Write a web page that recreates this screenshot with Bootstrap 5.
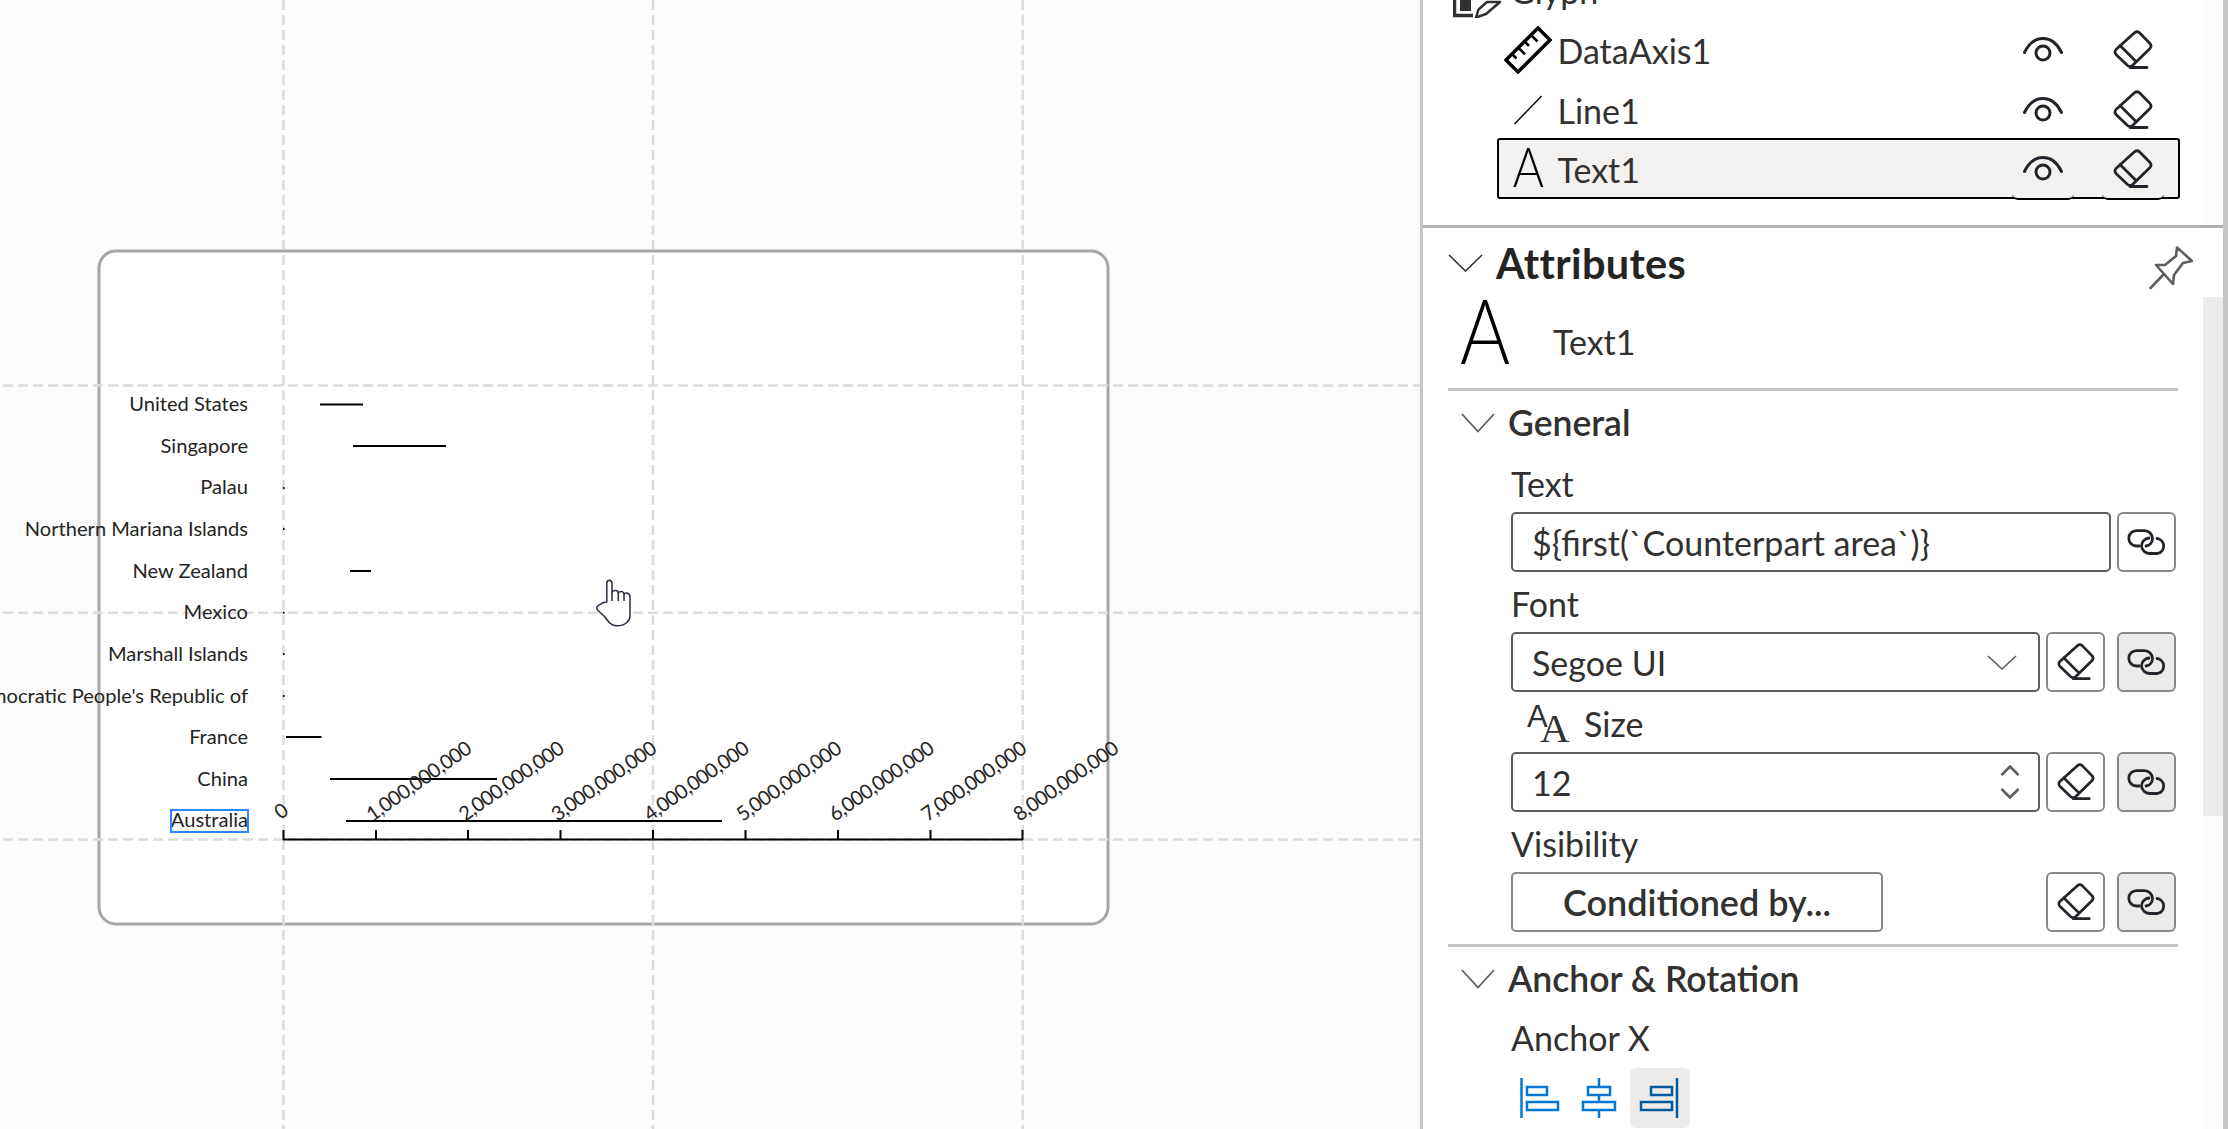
<!DOCTYPE html>
<html lang="en">
<head>
<meta charset="utf-8">
<title>Chart editor</title>
<link href="https://cdn.jsdelivr.net/npm/bootstrap@5.3.0/dist/css/bootstrap.min.css" rel="stylesheet">
<style>
html,body{height:100%;overflow:hidden;background:#fbfbfb}
body{font-family:"Lato","Liberation Sans",sans-serif;color:#323130;font-size:34px}
.app-shell{width:2228px;height:1129px}
.canvas-area{width:1420px;height:1129px;flex:none;background:#fbfbfb}
.canvas-area svg{display:block}
.chart-txt{font-family:"Lato","Liberation Sans",sans-serif;font-size:20.1px;fill:#252423}
.tick-txt{font-family:"Lato","Liberation Sans",sans-serif;font-size:20px;letter-spacing:-.55px;fill:#252423}
.side-panel{width:808px;height:1129px;flex:none;background:#fff;border-left:3px solid #c8c6c4;border-right:5px solid #c8c6c4}
.pane-top{height:225px;overflow:hidden}
.pane-rule{height:3px;background:#b3b0ad;flex:none}
.pane-body{height:901px;overflow:hidden}
.pane-main{width:780px;flex:none;overflow:hidden}
.track-top{width:20px;flex:none;background:#fbfbfb}
.track-body{width:20px;flex:none;background:#fbfbfb}
.track-gap{height:69px;background:#fff}
.track-thumb{height:519px;background:#ececec}
.tree-list{width:683px;margin:-40px 0 0 74px}
.tree-row{height:60px;padding-right:14px;border:2px solid transparent;border-radius:3px}
.tree-root{margin-left:-46px;width:300px}
.tree-root svg{flex:none;margin:0 7px 0 0;position:relative;top:3px}
.tree-row.is-picked{background:#f3f2f1;border-color:#000;height:61px;margin-top:-2px;position:relative}
.picked-name{padding-top:2px}
.tree-ico{width:58.500px;flex:none}
.tree-acts{gap:28px}
.act-btn{width:62px;height:56px;padding:0;border:0;background:transparent;border-radius:0}
.is-picked .act-btn{height:59px;align-self:flex-start;background:#f3f2f1;border-bottom:2px solid #000;border-radius:0 0 6px 6px;position:relative;margin-bottom:-3px}
.glyph-a{font-family:"Lato",sans-serif;font-weight:300;color:#000;line-height:1;transform:scaleX(.85)}
.glyph-row{font-size:56px;margin-bottom:6px}
.attr-head{height:70px;padding-left:25px}
.attr-title{font-weight:700;font-size:41.500px;letter-spacing:.3px;margin-left:13px;color:#252423}
.pin-slot{margin-left:auto;margin-right:10px;margin-top:10px}
.attr-sub{height:90px;padding-left:37px}
.attr-sub .glyph-a{font-size:90px;width:93px;flex:none;text-align:left;transform-origin:left center;margin-bottom:28px}
.attr-name{margin-bottom:4px}
.sec-rule{height:3px;background:#c8c6c4;width:730px;margin-left:25px;margin-bottom:0}
.sec-head{height:64px;padding-left:38px;font-weight:600;font-size:35.500px}
.sec-head span{margin-left:13px}
.fld-wrap{margin-left:88px;width:665px}
.fld-label{height:57px}
.fld-label.lbl-tall{height:60px;padding-top:2px}
.fld-label.lbl-up{padding-bottom:4px}
.fld-line{height:60px;gap:6px}
.fld-box.form-control{height:60px;flex:1 1 0;padding:0 0 0 19px;font-size:inherit;color:#323130;border:2.500px solid #605e5c;border-radius:5px;background:#fff}
.sq-btn{width:59px;height:60px;flex:none;padding:0;background:#fff;border:2.500px solid #8a8886;border-radius:6px;margin-left:0}
.sq-btn.is-on{background:#edebe9}
.sq-gap{margin-right:6px}
.size-ico{margin:0 13px 0 16px}
.sel-chev{margin-right:21px}
.cond-btn{width:372px;height:60px;padding:0;background:#fff;border:2.500px solid #8a8886;border-radius:5px;color:#323130;font-size:36px;font-weight:600}
.spin-col{gap:12px;margin-right:18px}
.mt-rule{margin-top:12px}
.algn-row{height:60px;margin-left:87px;width:180px}
.algn-btn{width:60px;height:60px;padding:0;border:0;background:transparent;border-radius:6px}
.algn-btn.is-on{background:#edebe9}
.hand-cursor{pointer-events:none}
</style>
</head>
<body class="m-0">
<svg class="d-none" aria-hidden="true">
  <symbol id="i-eraser" viewBox="0 0 40 40"><path d="M21.5 2.8Q24 .8 26.500 2.8L37 13.5Q39 16 37 18.5L19.5 35.5Q17 37.5 14.5 35.5L3 24.5Q1 22 3 19.5ZM7 15.5 23 31.5M17 37.5H34" fill="none" stroke="currentColor" stroke-width="2.8" stroke-linejoin="round" stroke-linecap="round"/></symbol>
  <symbol id="i-link" viewBox="0 0 40 26"><g fill="none" stroke="currentColor" stroke-width="2.8" stroke-linecap="round"><path d="M12 17H9.5A7.7 7.7 0 0 1 9.5 1.6H17.5A8 8 0 0 1 25.5 9.5C25.5 14 22 16.5 19 17"/><path d="M30 9.5A7.6 7.6 0 0 1 30.5 24.5H22.5A8 8 0 0 1 14.5 17C14.5 12.5 18 9.7 22 9"/></g></symbol>
  <symbol id="i-eye" viewBox="0 0 40 26"><g fill="none" stroke="currentColor" stroke-width="3" stroke-linecap="round"><path d="M1.5 15.5C6 6 13 1.5 20 1.5S34 6 38.5 15.5"/><circle cx="20" cy="16" r="7"/></g></symbol>
</svg>
<div class="app-shell d-flex">
  <div class="canvas-area">
    <svg width="1420" height="1129" viewBox="0 0 1420 1129" role="img" aria-label="Chart">
      <rect x="99" y="251" width="1009" height="673" rx="17" fill="#fff" stroke="#a6a6a6" stroke-width="3"/>
      <g stroke="#dcdcdc" stroke-width="2.5" stroke-dasharray="10 5" fill="none">
        <path d="M3 385.500H1420M3 612.700H1420M3 839.500H1420"/>
        <path d="M283.500 0V1129M653 0V1129M1022.800 0V1129"/>
      </g>
      <g class="chart-txt" text-anchor="end">
        <text x="248" y="411">United States</text>
        <text x="248" y="453">Singapore</text>
        <text x="248" y="494">Palau</text>
        <text x="248" y="536">Northern Mariana Islands</text>
        <text x="248" y="578">New Zealand</text>
        <text x="248" y="619">Mexico</text>
        <text x="248" y="661">Marshall Islands</text>
        <text x="248" y="703">Korea, Democratic People's Republic of</text>
        <text x="248" y="744">France</text>
        <text x="248" y="786">China</text>
        <text x="248" y="827">Australia</text>
      </g>
      <rect x="171" y="810" width="77" height="22" fill="none" stroke="#2b88ff" stroke-width="2"/>
      <g stroke="#000" stroke-width="2" fill="none">
        <path d="M320 404.500H363M353 446H446M350 571H371M286 737H321.500M330 779H497M346 821H722"/>
        <path d="M283 488h1.500M283 529h1.500M283 612.700h1.500M283 654h1.500M283 696h1.500"/>
        <path d="M283 839.500H1023M283.500 830V840M376 830V840M468 830V840M560.500 830V840M653 830V840M745.500 830V840M838 830V840M930.500 830V840M1022.500 830V840"/>
      </g>
      <g class="tick-txt">
        <text transform="translate(280.500 820) rotate(-35)">0</text>
        <text transform="translate(372.500 822) rotate(-35)">1,000,000,000</text>
        <text transform="translate(465 822) rotate(-35)">2,000,000,000</text>
        <text transform="translate(557.500 822) rotate(-35)">3,000,000,000</text>
        <text transform="translate(650 822) rotate(-35)">4,000,000,000</text>
        <text transform="translate(742.500 822) rotate(-35)">5,000,000,000</text>
        <text transform="translate(835 822) rotate(-35)">6,000,000,000</text>
        <text transform="translate(927.500 822) rotate(-35)">7,000,000,000</text>
        <text transform="translate(1019.500 822) rotate(-35)">8,000,000,000</text>
      </g>
      <g class="hand-cursor" fill="#fff" stroke="#2b2b44" stroke-width="1.5" stroke-linejoin="round">
        <path d="M597 606.700C600 604 604 602 606.800 602V583.500C606.800 579 612 579 612 583.500V592C614 589.500 618 590 618.300 593C620 590.500 623.500 591 624 594C626 592 630 593 630 597V616C630 621 625 625.800 617 625.800C611 625.800 608 621.500 605 617L597 609.500Z"/>
        <path d="M612 592V601M618.300 593V601M624 594V601" fill="none"/>
      </g>
    </svg>
  </div>
  <aside class="side-panel d-flex flex-column">
    <div class="pane-top d-flex">
      <div class="pane-main">
        <div class="tree-list">
          <div class="tree-row tree-root d-flex align-items-center">
            <svg width="50" height="50" viewBox="0 0 50 50" fill="none" stroke="#323130" stroke-width="3"><path d="M1.500 20V47.500H20" stroke-width="3.500"/><rect x="7" y="30" width="11" height="13" fill="#323130" stroke="none"/><path d="M23 49.500 25.500 41.500 34 34 47 34 33 46Z" stroke-width="2.500" stroke-linejoin="round"/></svg>
            <span>Glyph</span>
          </div>
          <div class="tree-row d-flex align-items-center">
            <span class="tree-ico d-flex justify-content-center">
              <svg width="48" height="48" viewBox="0 0 48 48" fill="none" stroke="#000" stroke-width="3.4" stroke-linejoin="miter"><path d="M34 2 46 14 14 46 2 34Z"/><path d="M8 28 12.500 32.500M14.300 21.700 21 28.400M20.600 15.400 25 19.800M27 9 33.500 15.500" stroke-width="2.600"/></svg>
            </span>
            <span>DataAxis1</span>
            <span class="tree-acts d-flex ms-auto">
              <button class="btn act-btn" type="button" aria-label="Show"><svg width="40" height="26" class="text-dark"><use href="#i-eye"/></svg></button>
              <button class="btn act-btn" type="button" aria-label="Erase"><svg width="40" height="40" class="text-dark"><use href="#i-eraser"/></svg></button>
            </span>
          </div>
          <div class="tree-row d-flex align-items-center">
            <span class="tree-ico d-flex justify-content-center">
              <svg width="30" height="30" viewBox="0 0 30 30"><path d="M1.500 29 28.500 1" stroke="#000" stroke-width="1.400" fill="none"/></svg>
            </span>
            <span>Line1</span>
            <span class="tree-acts d-flex ms-auto">
              <button class="btn act-btn" type="button" aria-label="Show"><svg width="40" height="26" class="text-dark"><use href="#i-eye"/></svg></button>
              <button class="btn act-btn" type="button" aria-label="Erase"><svg width="40" height="40" class="text-dark"><use href="#i-eraser"/></svg></button>
            </span>
          </div>
          <div class="tree-row is-picked d-flex align-items-center">
            <span class="tree-ico d-flex justify-content-center">
              <span class="glyph-a glyph-row">A</span>
            </span>
            <span class="picked-name">Text1</span>
            <span class="tree-acts d-flex ms-auto">
              <button class="btn act-btn" type="button" aria-label="Show"><svg width="40" height="26" class="text-dark"><use href="#i-eye"/></svg></button>
              <button class="btn act-btn" type="button" aria-label="Erase"><svg width="40" height="40" class="text-dark"><use href="#i-eraser"/></svg></button>
            </span>
          </div>
        </div>
      </div>
      <div class="track-top"></div>
    </div>
    <div class="pane-rule"></div>
    <div class="pane-body d-flex">
      <div class="pane-main">
        <div class="attr-head d-flex align-items-center">
          <svg width="35" height="18" viewBox="0 0 35 18" fill="none" stroke="#323130" stroke-width="1.600"><path d="M1 1 17.500 17 34 1"/></svg>
          <span class="attr-title">Attributes</span>
          <span class="pin-slot d-flex">
            <svg width="44" height="44" viewBox="0 0 44 44" fill="none" stroke="#605e5c" stroke-width="2.600" stroke-linejoin="round" stroke-linecap="round"><path d="M28 1.500 43 15 34 17 25 29 24 38 7 19 16 19 27 10ZM15 28 1.500 42"/></svg>
          </span>
        </div>
        <div class="attr-sub d-flex align-items-center">
          <span class="glyph-a">A</span>
          <span class="attr-name">Text1</span>
        </div>
        <div class="sec-rule"></div>
        <div class="sec-head d-flex align-items-center">
          <svg width="34" height="20" viewBox="0 0 34 20" fill="none" stroke="#605e5c" stroke-width="1.800"><path d="M1 1 17 18.500 33 1"/></svg>
          <span>General</span>
        </div>
        <div class="fld-wrap">
          <div class="fld-label d-flex align-items-center">Text</div>
          <div class="fld-line d-flex">
            <div class="fld-box form-control d-flex align-items-center">${first(`Counterpart area`)}</div>
            <button class="btn sq-btn" type="button" aria-label="Bind"><svg width="40" height="26" class="text-dark"><use href="#i-link"/></svg></button>
          </div>
          <div class="fld-label lbl-tall d-flex align-items-center">Font</div>
          <div class="fld-line d-flex">
            <div class="fld-box form-control d-flex align-items-center justify-content-between">
              <span>Segoe UI</span>
              <svg class="sel-chev" width="30" height="15" viewBox="0 0 30 15" fill="none" stroke="#605e5c" stroke-width="1.600"><path d="M1 1 15 14 29 1"/></svg>
            </div>
            <button class="btn sq-btn sq-gap" type="button" aria-label="Erase"><svg width="38" height="38" class="text-dark"><use href="#i-eraser"/></svg></button>
            <button class="btn sq-btn is-on" type="button" aria-label="Bind"><svg width="40" height="26" class="text-dark"><use href="#i-link"/></svg></button>
          </div>
          <div class="fld-label lbl-tall d-flex align-items-center">
            <svg class="size-ico" width="44" height="40" viewBox="0 0 44 40"><text x="0" y="24" font-family="Liberation Sans, sans-serif" font-size="31" fill="#323130">A</text><text x="13" y="39" font-family="Liberation Serif, serif" font-size="41" fill="#323130">A</text></svg>
            <span>Size</span>
          </div>
          <div class="fld-line d-flex">
            <div class="fld-box form-control d-flex align-items-center justify-content-between">
              <span>12</span>
              <span class="spin-col d-flex flex-column">
                <svg class="d-block" width="20" height="11" viewBox="0 0 20 11" fill="none" stroke="#605e5c" stroke-width="2.600"><path d="M1.500 10 10 1.500 18.500 10"/></svg>
                <svg class="d-block" width="20" height="11" viewBox="0 0 20 11" fill="none" stroke="#605e5c" stroke-width="2.600"><path d="M1.500 1 10 9.500 18.500 1"/></svg>
              </span>
            </div>
            <button class="btn sq-btn sq-gap" type="button" aria-label="Erase"><svg width="38" height="38" class="text-dark"><use href="#i-eraser"/></svg></button>
            <button class="btn sq-btn is-on" type="button" aria-label="Bind"><svg width="40" height="26" class="text-dark"><use href="#i-link"/></svg></button>
          </div>
          <div class="fld-label lbl-tall d-flex align-items-center">Visibility</div>
          <div class="fld-line d-flex">
            <button class="btn cond-btn" type="button">Conditioned by...</button>
            <button class="btn sq-btn sq-gap ms-auto" type="button" aria-label="Erase"><svg width="38" height="38" class="text-dark"><use href="#i-eraser"/></svg></button>
            <button class="btn sq-btn is-on" type="button" aria-label="Bind"><svg width="40" height="26" class="text-dark"><use href="#i-link"/></svg></button>
          </div>
        </div>
        <div class="sec-rule mt-rule"></div>
        <div class="sec-head d-flex align-items-center">
          <svg width="34" height="20" viewBox="0 0 34 20" fill="none" stroke="#605e5c" stroke-width="1.800"><path d="M1 1 17 18.500 33 1"/></svg>
          <span>Anchor &amp; Rotation</span>
        </div>
        <div class="fld-wrap">
          <div class="fld-label lbl-up d-flex align-items-center">Anchor X</div>
        </div>
        <div class="algn-row d-flex">
          <button class="btn algn-btn" type="button" aria-label="Left"><svg width="60" height="60" viewBox="0 0 60 60" fill="#fff" stroke="#0078d4" stroke-width="2.500"><path d="M11.500 10V50"/><rect x="17" y="19" width="20" height="8"/><rect x="17" y="34" width="31" height="8"/></svg></button>
          <button class="btn algn-btn" type="button" aria-label="Center"><svg width="60" height="60" viewBox="0 0 60 60" fill="#fff" stroke="#0078d4" stroke-width="2.500"><path d="M29 10V50"/><rect x="18" y="19" width="22" height="8"/><rect x="13" y="34" width="32" height="8"/></svg></button>
          <button class="btn algn-btn is-on" type="button" aria-label="Right"><svg width="60" height="60" viewBox="0 0 60 60" fill="none" stroke="#005a9e" stroke-width="2.500"><path d="M47 10V50"/><rect x="21" y="19" width="21" height="8"/><rect x="11" y="34" width="31" height="8"/></svg></button>
        </div>
      </div>
      <div class="track-body">
        <div class="track-gap"></div>
        <div class="track-thumb"></div>
      </div>
    </div>
  </aside>
</div>
<script src="https://cdn.jsdelivr.net/npm/bootstrap@5.3.0/dist/js/bootstrap.bundle.min.js"></script>
</body>
</html>
